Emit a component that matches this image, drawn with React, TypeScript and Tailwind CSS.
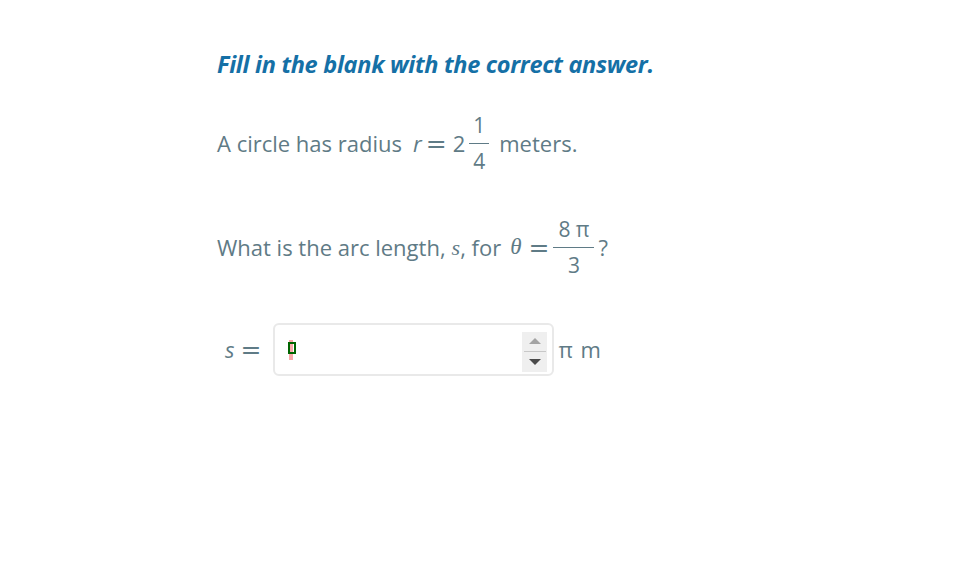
import React from 'react';

const textColor = 'text-[#5f7b86]';

interface FractionProps {
  top: React.ReactNode;
  bottom: React.ReactNode;
  lineWidth: string;
}

const Fraction: React.FC<FractionProps> = ({ top, bottom, lineWidth }) => (
  <span className="inline-flex flex-col items-center mx-[4px] text-[21px] leading-none">
    <span className="pb-[7px]">{top}</span>
    <span className={`border-t border-[#5f7b86] ${lineWidth}`} />
    <span className="pt-[7px]">{bottom}</span>
  </span>
);

const Equals: React.FC<{ className?: string }> = ({ className = '' }) => (
  <span
    className={`text-[25px] leading-none ${className}`}
    style={{ fontFamily: '"DejaVu Sans", sans-serif' }}
  >
    =
  </span>
);

const Spinner: React.FC = () => (
  <div className="flex flex-col items-center justify-between w-[25px] h-[40px] bg-[#efefef] mr-[5px] mt-[7px]">
    <svg width="14" height="9" viewBox="0 0 14 9" className="mt-[4px]">
      <path d="M1 8 L7 2 L13 8 Z" fill="#a3a3a3" />
    </svg>
    <span className="w-[22px] border-t border-[#c8c8c8]" />
    <svg width="14" height="9" viewBox="0 0 14 9" className="mb-[5px]">
      <path d="M1 1 L13 1 L7 7 Z" fill="#4a4a4a" />
    </svg>
  </div>
);

const App: React.FC = () => {
  return (
    <div
      className={`w-[963px] h-[575px] bg-white pl-[217px] pt-[48px] ${textColor}`}
      style={{ fontFamily: '"Open Sans", "Noto Sans", sans-serif' }}
    >
      <h1 className="text-[23.5px] font-bold italic text-[#1570a6] leading-[32px] tracking-[-0.3px]">
        Fill in the blank with the correct answer.
      </h1>

      <div className="flex items-center mt-[33px] text-[22px] h-[60px]">
        <span>A circle has radius</span>
        <span className="italic ml-[11px]">r</span>
        <Equals className="ml-[4px]" />
        <span className="ml-[6px]">2</span>
        <Fraction top="1" bottom="4" lineWidth="w-[20px]" />
        <span className="ml-[6px]">meters.</span>
      </div>

      <div className="flex items-center mt-[44px] text-[22px] h-[60px]">
        <span>What is the arc length,</span>
        <span className="italic ml-[6px]" style={{ fontFamily: '"Liberation Serif", serif' }}>s</span>
        <span>, for</span>
        <span className="italic ml-[9px] text-[23px]" style={{ fontFamily: '"Liberation Serif", serif' }}>θ</span>
        <Equals className="ml-[7px]" />
        <Fraction top="8 π" bottom="3" lineWidth="w-[41px]" />
        <span>?</span>
      </div>

      <div className="flex items-center mt-[46px] text-[22px]">
        <span className="italic ml-[8px]">s</span>
        <Equals className="ml-[6px]" />
        <div className="ml-[12px] w-[281px] h-[53px] border-2 border-[#e9e9e9] rounded-[6px] flex items-start justify-between">
          <div className="relative ml-[13px] mt-[15px] w-[10px] h-[20px]">
            <span className="absolute left-[1px] top-0 w-[4px] h-[20px] bg-[#f7a9a9]" />
            <span className="absolute left-0 top-[2px] w-[8px] h-[12px] border-2 border-[#006400]" />
          </div>
          <Spinner />
        </div>
        <span className="ml-[4px] tracking-[1px]">π m</span>
      </div>
    </div>
  );
};

export default App;
